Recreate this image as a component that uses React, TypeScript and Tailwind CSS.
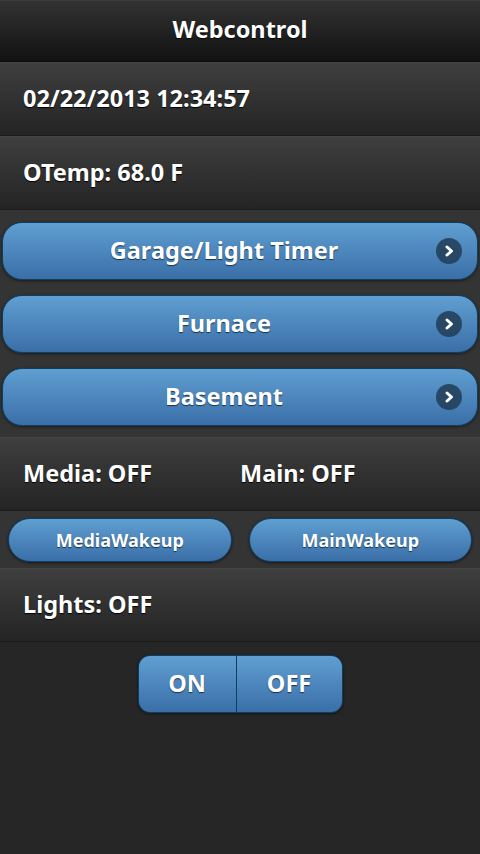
import React from 'react';

const font = { fontFamily: '"Noto Sans", "Open Sans", "DejaVu Sans", sans-serif' };

function Chevron() {
  return (
    <span className="absolute right-[15px] top-1/2 -translate-y-1/2 flex h-[26px] w-[26px] items-center justify-center rounded-full bg-[#24405c]/90">
      <svg width="14" height="14" viewBox="0 0 14 14">
        <path d="M5 3 L9.5 7 L5 11" fill="none" stroke="#fff" strokeWidth="3" strokeLinecap="round" strokeLinejoin="round" />
      </svg>
    </span>
  );
}

function NavButton({ label }: { label: string }) {
  return (
    <button className="relative flex h-[58px] w-full items-center justify-center rounded-[20px] border border-[#0e3f63] bg-gradient-to-b from-[#609fd2] to-[#3a6fa7] pl-[8px] pr-[40px] text-[23.5px] font-bold text-white [text-shadow:0_1px_1px_#17324d] shadow-[0_1px_3px_rgba(0,0,0,0.5)]">
      {label}
      <Chevron />
    </button>
  );
}

function ListItem({ children }: { children: React.ReactNode }) {
  return (
    <div className="flex h-[74px] items-center border-t border-[#454545] border-b border-b-[#1b1b1b] bg-gradient-to-b from-[#3e3f3e] to-[#232423] px-[23px] text-[23.5px] font-bold text-white [text-shadow:0_1px_1px_#000]">
      {children}
    </div>
  );
}

export default function App() {
  return (
    <div style={font} className="flex min-h-[854px] w-[480px] flex-col bg-[#252625]">
      <header className="flex h-[62px] items-center justify-center border-t border-[#3c3c3c] border-b border-b-[#0c0c0c] bg-gradient-to-b from-[#333333] to-[#121212] pb-[2px] text-[23.5px] font-bold text-white [text-shadow:0_1px_1px_#000]">
        Webcontrol
      </header>

      <ListItem>02/22/2013 12:34:57</ListItem>
      <ListItem>OTemp: 68.0 F</ListItem>

      <div className="flex flex-col gap-[15px] bg-[#333433] px-[2px] pt-[12px] pb-[11px]">
        <NavButton label="Garage/Light Timer" />
        <NavButton label="Furnace" />
        <NavButton label="Basement" />
      </div>

      <ListItem>
        <div className="grid w-full grid-cols-2">
          <span>Media: OFF</span>
          <span>Main: OFF</span>
        </div>
      </ListItem>

      <div className="grid grid-cols-2 gap-[17px] bg-[#333433] px-[8px] pt-[7px] pb-[6px]">
        {['MediaWakeup', 'MainWakeup'].map((l) => (
          <button
            key={l}
            className="flex h-[44px] items-center justify-center rounded-full border border-[#0e3f63] bg-gradient-to-b from-[#609fd2] to-[#3a6fa7] text-[18px] font-bold text-white [text-shadow:0_1px_1px_#17324d] shadow-[0_1px_3px_rgba(0,0,0,0.6)]"
          >
            {l}
          </button>
        ))}
      </div>

      <ListItem>Lights: OFF</ListItem>

      <div className="flex justify-center pt-[13px]">
        <div className="flex h-[58px] overflow-hidden rounded-[12px] border border-[#0e3f63] shadow-[0_1px_3px_rgba(0,0,0,0.5)]">
          <button className="flex w-[98px] items-center justify-center border-r border-[#0e3f63] bg-gradient-to-b from-[#609fd2] to-[#3a6fa7] text-[23.5px] font-bold text-white [text-shadow:0_1px_1px_#17324d]">
            ON
          </button>
          <button className="flex w-[105px] items-center justify-center bg-gradient-to-b from-[#609fd2] to-[#3a6fa7] text-[23.5px] font-bold text-white [text-shadow:0_1px_1px_#17324d]">
            OFF
          </button>
        </div>
      </div>
    </div>
  );
}
